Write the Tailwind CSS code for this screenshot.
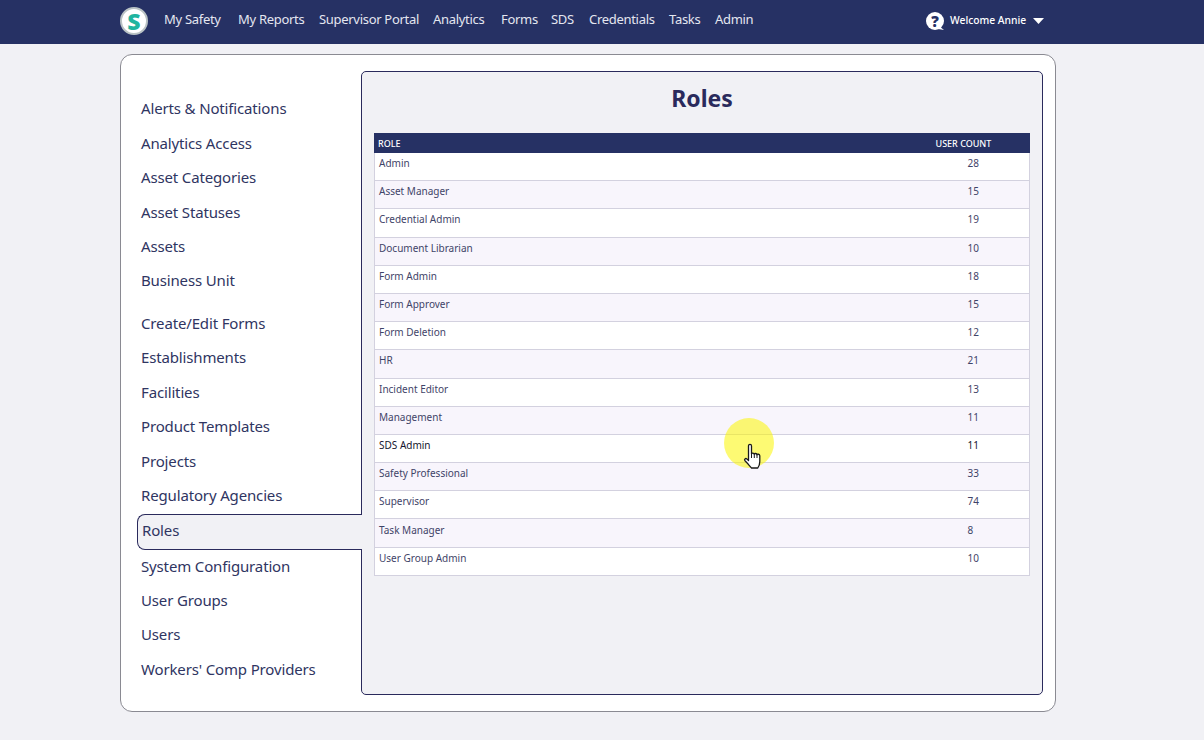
<!doctype html>
<html lang="en">
<head>
<meta charset="UTF-8" />
<title>Roles</title>
<script src="https://cdn.jsdelivr.net/npm/@tailwindcss/browser@4"></script>
</head>
<body class="bg-[#f1f1f5] h-[740px] overflow-hidden font-['Noto_Sans',sans-serif] relative">
    <!-- top nav -->
    <nav class="h-[44px] bg-[#263164] flex items-center pl-[120px] text-[#e4e6f0]">
        <div class="w-[28px] h-[28px] rounded-full bg-white border-2 border-[#b9c2c4] flex items-center justify-center mb-[2px]">
            <span class="text-[#1fb5a0] font-black text-[23px] leading-none font-['Open_Sans',sans-serif]">S</span>
        </div>
        <div class="flex gap-[15px] ml-[16px] text-[13px] mb-[4px] tracking-[-0.3px] whitespace-nowrap">
            <a class="w-[59px]">My Safety</a>
            <a class="w-[66px]">My Reports</a>
            <a class="w-[99px]">Supervisor Portal</a>
            <a class="w-[53px]">Analytics</a>
            <a class="w-[35px]">Forms</a>
            <a class="w-[23px]">SDS</a>
            <a class="w-[65px]">Credentials</a>
            <a class="w-[31px]">Tasks</a>
            <a class="w-[38px]">Admin</a>
        </div>
        <div class="absolute left-[925px] top-[11px] flex items-center">
            <div class="relative w-[20px] h-[20px]">
                <svg class="w-[20px] h-[20px]" viewBox="0 0 20 20"><circle cx="10" cy="10" r="9" fill="#fff"/><path d="M14 15l5 4-6-1z" fill="#fff"/></svg>
                <span class="absolute inset-0 flex items-center justify-center text-[#263164] font-black text-[15px] leading-none">?</span>
            </div>
            <span class="ml-[5px] text-[10.3px] text-white font-medium">Welcome Annie</span>
            <svg class="ml-[7px] mb-[1px] w-[11px] h-[6px]" viewBox="0 0 11 6"><path d="M0 0h11L5.5 6z" fill="#fff"/></svg>
        </div>
    </nav>

    <!-- main card -->
    <main class="mt-[10px] ml-[120px] w-[936px] h-[658px] bg-white border border-[#8a8a92] rounded-[12px] flex pt-[16px]">
        <aside class="w-[240px] pt-[20.4px] text-[15px] text-[#2f3562] tracking-[-0.15px] shrink-0">
            <div class="h-[34.4px] flex items-center pl-[20px]">Alerts &amp; Notifications</div>
            <div class="h-[34.4px] flex items-center pl-[20px]">Analytics Access</div>
            <div class="h-[34.4px] flex items-center pl-[20px]">Asset Categories</div>
            <div class="h-[34.4px] flex items-center pl-[20px]">Asset Statuses</div>
            <div class="h-[34.4px] flex items-center pl-[20px]">Assets</div>
            <div class="h-[34.4px] flex items-center pl-[20px]">Business Unit</div>
            <div class="h-[34.4px] flex items-center pl-[20px] mt-[8.3px]">Create/Edit Forms</div>
            <div class="h-[34.4px] flex items-center pl-[20px]">Establishments</div>
            <div class="h-[34.4px] flex items-center pl-[20px]">Facilities</div>
            <div class="h-[34.4px] flex items-center pl-[20px]">Product Templates</div>
            <div class="h-[34.4px] flex items-center pl-[20px]">Projects</div>
            <div class="h-[34.4px] flex items-center pl-[20px]">Regulatory Agencies</div>
            <div class="h-[36px] mt-[1.9px] mb-[-1.7px] ml-[16px] w-[225px] flex items-center pl-[4px] pb-[4px] bg-[#f1f1f5] border border-r-0 border-[#2a2a5c] rounded-l-[8px] relative z-10">Roles</div>
            <div class="h-[34.4px] flex items-center pl-[20px]">System Configuration</div>
            <div class="h-[34.4px] flex items-center pl-[20px]">User Groups</div>
            <div class="h-[34.4px] flex items-center pl-[20px]">Users</div>
            <div class="h-[34.4px] flex items-center pl-[20px]">Workers' Comp Providers</div>
        </aside>

        <section class="w-[682px] h-[624px] bg-[#f1f1f5] border border-[#2a2a5c] rounded-[5px] px-[12px]">
            <h1 class="text-center text-[23px] font-bold text-[#2a2a5c] leading-none mt-[15px] h-[46px]">Roles</h1>
            <table class="w-[656px] table-fixed border-collapse text-[10px] text-[#3f4468]">
                <thead>
                    <tr class="h-[19px] bg-[#263164] border border-[#263164] text-white text-[9px]">
                        <th class="text-left font-medium pl-[3px] pt-[1px]">ROLE</th>
                        <th class="w-[94px] text-left font-medium pt-[1px]">USER COUNT</th>
                    </tr>
                </thead>
                <tbody>
                    <tr class="h-[28.2px] bg-white border border-[#d3d1df]"><td class="pl-[4px] pb-[6px]">Admin</td><td class="pl-[32px] pb-[6px]">28</td></tr>
                    <tr class="h-[28.2px] bg-[#f8f5fc] border border-[#d3d1df]"><td class="pl-[4px] pb-[6px]">Asset Manager</td><td class="pl-[32px] pb-[6px]">15</td></tr>
                    <tr class="h-[28.2px] bg-white border border-[#d3d1df]"><td class="pl-[4px] pb-[6px]">Credential Admin</td><td class="pl-[32px] pb-[6px]">19</td></tr>
                    <tr class="h-[28.2px] bg-[#f8f5fc] border border-[#d3d1df]"><td class="pl-[4px] pb-[6px]">Document Librarian</td><td class="pl-[32px] pb-[6px]">10</td></tr>
                    <tr class="h-[28.2px] bg-white border border-[#d3d1df]"><td class="pl-[4px] pb-[6px]">Form Admin</td><td class="pl-[32px] pb-[6px]">18</td></tr>
                    <tr class="h-[28.2px] bg-[#f8f5fc] border border-[#d3d1df]"><td class="pl-[4px] pb-[6px]">Form Approver</td><td class="pl-[32px] pb-[6px]">15</td></tr>
                    <tr class="h-[28.2px] bg-white border border-[#d3d1df]"><td class="pl-[4px] pb-[6px]">Form Deletion</td><td class="pl-[32px] pb-[6px]">12</td></tr>
                    <tr class="h-[28.2px] bg-[#f8f5fc] border border-[#d3d1df]"><td class="pl-[4px] pb-[6px]">HR</td><td class="pl-[32px] pb-[6px]">21</td></tr>
                    <tr class="h-[28.2px] bg-white border border-[#d3d1df]"><td class="pl-[4px] pb-[6px]">Incident Editor</td><td class="pl-[32px] pb-[6px]">13</td></tr>
                    <tr class="h-[28.2px] bg-[#f8f5fc] border border-[#d3d1df]"><td class="pl-[4px] pb-[6px]">Management</td><td class="pl-[32px] pb-[6px]">11</td></tr>
                    <tr class="h-[28.2px] bg-white border border-[#d3d1df] text-[#14142e]"><td class="pl-[4px] pb-[6px]">SDS Admin</td><td class="pl-[32px] pb-[6px]">11</td></tr>
                    <tr class="h-[28.2px] bg-[#f8f5fc] border border-[#d3d1df]"><td class="pl-[4px] pb-[6px]">Safety Professional</td><td class="pl-[32px] pb-[6px]">33</td></tr>
                    <tr class="h-[28.2px] bg-white border border-[#d3d1df]"><td class="pl-[4px] pb-[6px]">Supervisor</td><td class="pl-[32px] pb-[6px]">74</td></tr>
                    <tr class="h-[28.2px] bg-[#f8f5fc] border border-[#d3d1df]"><td class="pl-[4px] pb-[6px]">Task Manager</td><td class="pl-[32px] pb-[6px]">8</td></tr>
                    <tr class="h-[28.2px] bg-white border border-[#d3d1df]"><td class="pl-[4px] pb-[6px]">User Group Admin</td><td class="pl-[32px] pb-[6px]">10</td></tr>
                </tbody>
            </table>
        </section>
    </main>

    <!-- cursor highlight -->
    <div class="absolute left-[724px] top-[418px] w-[50px] h-[50px] rounded-full bg-[#fbf500]/55 pointer-events-none"></div>
    <svg class="absolute left-[743px] top-[443px] w-[20px] h-[26px] pointer-events-none" viewBox="0 0 20 26">
        <path d="M5.500 3c0-2.200 3-2.200 3 0v8c.2-1.300 2.600-1.300 2.800.300.300-1.200 2.500-1.100 2.700.500.400-1 2.600-.8 2.800 1v5.700c0 2.800-1 5-2 6.500H8.500c-1.500-1.500-3-3.700-6.500-7.200-1.200-1.300.6-2.900 1.800-1.900l1.700 1.600z" fill="#fff" stroke="#1a1a1a" stroke-width="1.300" stroke-linejoin="round"/>
        <path d="M8.500 11v4M11.300 11.500V15M14 12v3" stroke="#1a1a1a" stroke-width="1" fill="none"/>
    </svg>
</body>
</html>
